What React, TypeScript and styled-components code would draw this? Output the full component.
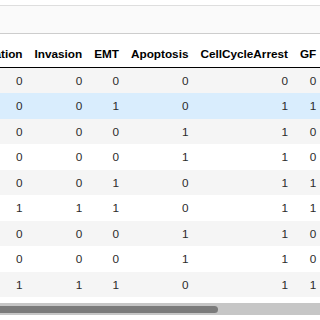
import { useLayoutEffect, useRef } from "react";
import styled, { createGlobalStyle, css } from "styled-components";

const GlobalStyle = createGlobalStyle`
  html, body {
    margin: 0;
    padding: 0;
    background: #fff;
  }

  body {
    font-family: "Liberation Sans", Arial, sans-serif;
  }
`;

const Page = styled.div`
  box-sizing: border-box;
  width: 320px;
  height: 320px;
  padding-top: 5px;
  overflow: hidden;
`;

const InputBox = styled.div`
  height: 27px;
  background: #fafafa;
  border-top: 1px solid #dedede;
  border-bottom: 1px solid #cdcdcd;
`;

const ScrollArea = styled.div`
  padding-top: 7px;
  overflow: hidden;
`;

const Table = styled.table`
  border-collapse: collapse;
  border-spacing: 0;
  font-size: 11.75px;
  color: #000;
`;

const Head = styled.thead`
  border-bottom: 1px solid #000;
`;

const cellBase = css`
  padding: 6px;
  line-height: 13.5px;
  text-align: right;
  white-space: nowrap;
`;

const HeadCell = styled.th`
  ${cellBase};
  font-weight: bold;
  vertical-align: bottom;
`;

type Tone = "odd" | "even" | "hover";

const Row = styled.tr<{ $tone: Tone }>`
  background: ${({ $tone }) =>
    $tone === "hover" ? "#d9edfd" : $tone === "odd" ? "#f5f5f5" : "#fff"};
`;

const Cell = styled.td`
  ${cellBase};
  color: #2b2b2b;
`;

const Track = styled.div`
  display: flex;
  align-items: center;
  height: 12px;
  margin-top: 6px;
  background: #c6c6c6;
`;

const Thumb = styled.div`
  width: 218px;
  height: 7px;
  background: #7b7b7b;
  border-radius: 0 4px 4px 0;
`;

const columns = [
  "Metastasis",
  "Migration",
  "Invasion",
  "EMT",
  "Apoptosis",
  "CellCycleArrest",
  "GF",
];

const rows = [
  [0, 0, 0, 0, 0, 0, 0],
  [0, 0, 0, 1, 0, 1, 1],
  [0, 0, 0, 0, 1, 1, 0],
  [0, 0, 0, 0, 1, 1, 0],
  [0, 0, 0, 1, 0, 1, 1],
  [1, 1, 1, 1, 0, 1, 1],
  [0, 0, 0, 0, 1, 1, 0],
  [0, 0, 0, 0, 1, 1, 0],
  [1, 1, 1, 1, 0, 1, 1],
];

const HOVERED_ROW = 1;

export default function App() {
  const areaRef = useRef<HTMLDivElement>(null);
  const anchorRef = useRef<HTMLTableCellElement>(null);

  // keep the Migration column's right edge just inside the left side of the view
  useLayoutEffect(() => {
    const area = areaRef.current;
    const anchor = anchorRef.current;
    if (!area || !anchor) return;
    const areaBox = area.getBoundingClientRect();
    const anchorBox = anchor.getBoundingClientRect();
    area.scrollLeft = anchorBox.right - areaBox.left + area.scrollLeft - 29;
  }, []);

  return (
    <>
      <GlobalStyle />
      <Page>
        <InputBox />
        <ScrollArea ref={areaRef}>
          <Table>
            <Head>
              <tr>
                <HeadCell />
                {columns.map((name) => (
                  <HeadCell
                    key={name}
                    ref={name === "Migration" ? anchorRef : undefined}
                  >
                    {name}
                  </HeadCell>
                ))}
              </tr>
            </Head>
            <tbody>
              {rows.map((values, i) => (
                <Row
                  key={i}
                  $tone={i === HOVERED_ROW ? "hover" : i % 2 === 0 ? "odd" : "even"}
                >
                  <HeadCell>{i}</HeadCell>
                  {values.map((v, j) => (
                    <Cell key={j}>{v}</Cell>
                  ))}
                </Row>
              ))}
            </tbody>
          </Table>
        </ScrollArea>
        <Track>
          <Thumb />
        </Track>
      </Page>
    </>
  );
}
